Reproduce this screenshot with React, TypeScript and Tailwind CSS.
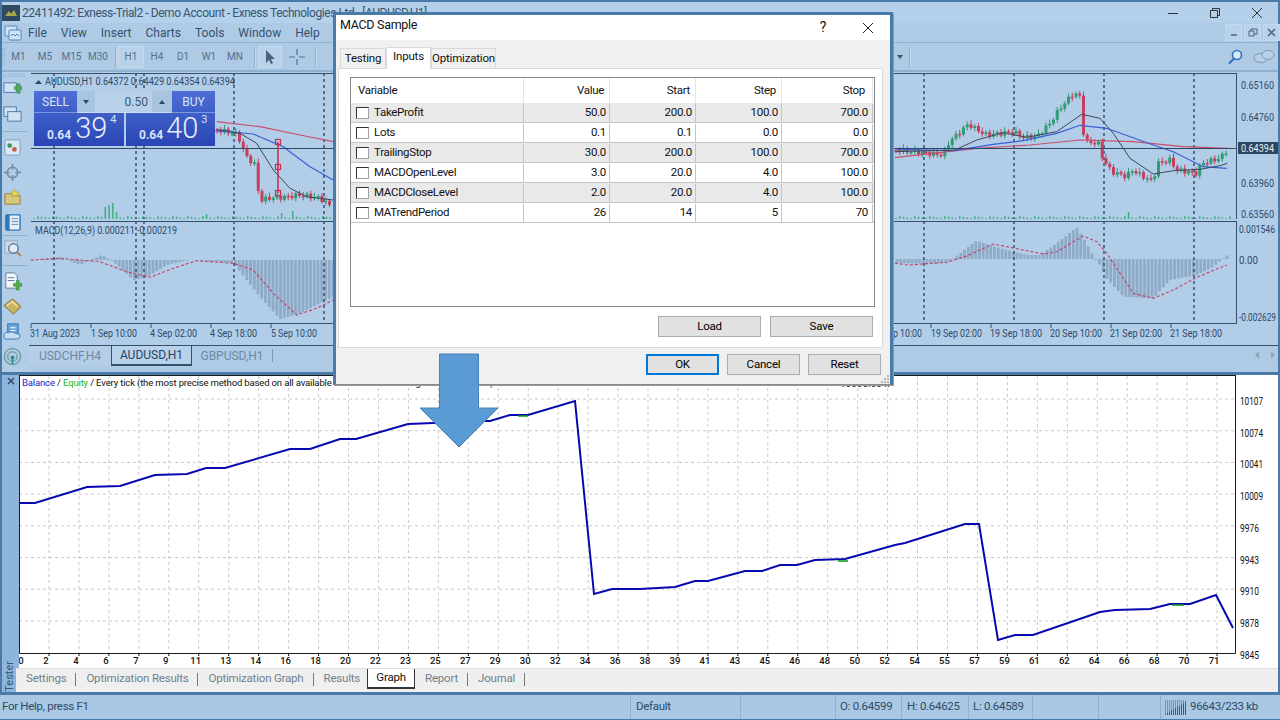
import React from 'react';

type Pt = [number, number];

const interp = (pts: Pt[], x: number) => {
  if (x <= pts[0][0]) return pts[0][1];
  for (let i = 1; i < pts.length; i++) {
    if (x <= pts[i][0]) {
      const [x0, y0] = pts[i - 1];
      const [x1, y1] = pts[i];
      return y0 + ((y1 - y0) * (x - x0)) / (x1 - x0);
    }
  }
  return pts[pts.length - 1][1];
};

const poly = (pts: Pt[]) => pts.map((p) => p[0].toFixed(1) + ',' + p[1].toFixed(1)).join(' ');
// zoomed crop coords back to page coords
const z = (ox: number, oy: number, pts: Pt[]): Pt[] => pts.map((p) => [ox + p[0] / 3, oy + p[1] / 3]);

const rightPrice = z(880, 0, [[50,450],[130,458],[190,465],[210,420],[225,410],[265,372],[300,395],[320,405],[400,395],[430,412],[470,410],[510,370],[540,325],[580,280],[600,290],[606,370],[615,425],[655,430],[670,480],[695,515],[740,530],[755,510],[800,535],[820,545],[830,490],[870,480],[890,510],[950,520],[965,490],[1020,475],[1045,445]]);
const rightBlack = z(880, 0, [[45,455],[225,450],[290,420],[370,398],[440,412],[530,395],[605,343],[660,355],[700,400],[750,475],[820,522],[880,512],[960,508],[1020,497],[1042,490]]);
const rightBlue = z(880, 0, [[50,448],[220,452],[340,433],[430,422],[530,400],[600,376],[680,385],[820,435],[880,455],[970,500],[1040,505]]);
const rightRed = z(880, 0, [[45,473],[290,445],[450,435],[600,420],[760,425],[910,440],[1045,445]]);
const leftPrice: Pt[] = [[217,130],[235,133],[240,140],[245,155],[255,165],[258,190],[262,200],[270,198],[285,197],[300,195],[320,198],[333,208]];
const leftBlack = z(0, 0, [[650,388],[720,400],[770,430],[820,510],[870,565],[920,590],[1000,600]]);
const leftBlue = z(0, 0, [[650,392],[760,402],[850,440],[930,500],[1000,540]]);
const leftRed = z(0, 0, [[650,365],[780,380],[900,405],[1000,425]]);

const leftHist = z(0, 200, [[92,182],[180,172],[240,195],[305,165],[340,185],[400,240],[440,232],[500,195],[570,180],[700,190],[780,290],[840,358],[900,340],[1000,290]]);
const leftSignal = z(0, 200, [[92,180],[180,175],[300,185],[380,215],[450,232],[520,205],[590,182],[700,190],[760,210],[820,280],[890,345],[950,325],[1000,300]]);
const rightHist = z(880, 220, [[50,130],[200,130],[240,100],[290,62],[360,85],[440,105],[480,105],[530,70],[590,22],[620,70],[645,118],[660,135],[680,175],[730,230],[820,235],[870,180],[950,165],[1000,140],[1045,103]]);
const rightSignal = z(880, 220, [[45,130],[85,135],[200,127],[260,108],[340,72],[430,90],[490,102],[530,95],[610,48],[650,65],[680,100],[760,220],[820,235],[880,210],[950,172],[1040,135]]);

const balance: Pt[] = [[19,503],[35,503],[87,487],[120,486],[155,475],[187,474],[206,468],[225,468],[290,449],[310,449],[340,439],[356,439],[408,424],[433,423],[483,421],[490,421],[510,415],[528,415],[575,401],[594,594],[612,589],[640,589],[675,587],[695,581],[708,581],[745,571],[762,571],[780,565],[797,565],[815,560],[845,559],[895,545],[905,543],[965,524],[979,524],[998,640],[1015,635],[1033,635],[1100,612],[1115,610],[1150,609],[1170,604],[1190,604],[1216,595],[1233,628]];

const xLabels = [0,2,4,6,7,9,11,13,14,16,18,20,22,23,25,27,29,30,32,34,36,38,39,41,43,45,46,48,50,52,54,55,57,59,61,62,64,66,68,70,71];
const yLabels = ['10107','10074','10041','10009','9976','9943','9910','9878','9845'];

const Candles = ({ pts, from, to }: { pts: Pt[]; from: number; to: number }) => {
  const out: React.ReactNode[] = [];
  let prev = interp(pts, from);
  let i = 0;
  for (let x = from; x <= to; x += 3.75) {
    const c = interp(pts, x) + Math.sin(i * 2.3) * 2.4;
    const up = c < prev;
    const top = Math.min(c, prev);
    const h = Math.max(Math.abs(c - prev), 1.5);
    const col = up ? '#2f9c72' : '#c63f5f';
    out.push(<line key={'w' + i} x1={x} x2={x} y1={top - 2 - (i % 3)} y2={top + h + 2 + (i % 2)} stroke={col} strokeWidth={1} />);
    out.push(<rect key={'b' + i} x={x - 1.5} y={top} width={3} height={h} fill={col} />);
    prev = c;
    i++;
  }
  return <g>{out}</g>;
};

const Hist = ({ pts, from, to, base }: { pts: Pt[]; from: number; to: number; base: number }) => {
  const out: React.ReactNode[] = [];
  let i = 0;
  for (let x = from; x <= to; x += 3.75) {
    const y = interp(pts, x);
    out.push(<rect key={i} x={x - 1.4} y={Math.min(y, base)} width={2.8} height={Math.abs(y - base)} fill="#8eaac6" />);
    i++;
  }
  return <g>{out}</g>;
};

const Volumes = ({ from, to, base, peaks }: { from: number; to: number; base: number; peaks: Record<number, number> }) => {
  const out: React.ReactNode[] = [];
  let i = 0;
  for (let x = from; x <= to; x += 3.75) {
    const h = peaks[i] ?? 1 + ((i * 7) % 4) * 0.6;
    out.push(<rect key={i} x={x - 0.7} y={base - h} width={1.5} height={h} fill="#3fae7c" />);
    i++;
  }
  return <g>{out}</g>;
};

const vGrid = [54, 136, 144, 234, 324, 924, 1014, 1104, 1194];

const PriceChart = () => (
  <svg width={1247} height={148} viewBox="31 72 1247 148" className="block overflow-visible" fontFamily="Roboto, sans-serif">
    <Volumes from={34} to={332} base={219} peaks={{ 19: 12, 20: 14, 21: 16, 22: 7, 46: 5, 66: 6, 69: 8 }} />
    <Volumes from={896} to={1230} base={219} peaks={{ 62: 7 }} />
    {vGrid.map((x) => (
      <line key={x} x1={x} x2={x} y1={73} y2={219} stroke="#34506c" strokeWidth={1.5} strokeDasharray="3 3" />
    ))}
    <Candles pts={leftPrice} from={217} to={333} />
    <Candles pts={rightPrice} from={896} to={1229} />
    <polyline points={poly(leftRed)} fill="none" stroke="#c8506e" strokeWidth={1.2} />
    <polyline points={poly(leftBlue)} fill="none" stroke="#3a5fd8" strokeWidth={1.2} />
    <polyline points={poly(leftBlack)} fill="none" stroke="#3b4a58" strokeWidth={1} />
    <polyline points={poly(rightRed)} fill="none" stroke="#c8506e" strokeWidth={1.2} />
    <polyline points={poly(rightBlue)} fill="none" stroke="#3a5fd8" strokeWidth={1.2} />
    <polyline points={poly(rightBlack)} fill="none" stroke="#3b4a58" strokeWidth={1} />
    <line x1={31} x2={1236} y1={148.5} y2={148.5} stroke="#2f4a66" strokeWidth={1} />
    {/* trend line tool */}
    <line x1={278} x2={278} y1={142} y2={193} stroke="#c8304f" strokeWidth={1.6} />
    {[142, 167, 193].map((y) => (
      <rect key={y} x={275.5} y={y - 2.5} width={5} height={5} fill="none" stroke="#c8304f" strokeWidth={1.2} />
    ))}
    <line x1={1236.5} x2={1236.5} y1={73} y2={219} stroke="#34506c" />
    <line x1={31} x2={1236} y1={73.5} y2={73.5} stroke="#34506c" />
    <text x={45} y={85} fontSize={11} fill="#2d4a68" textLength={190} lengthAdjust="spacingAndGlyphs">AUDUSD,H1  0.64372 0.64429 0.64354 0.64394</text>
    <path d="M35 84 l3.5 -4 l3.5 4 z" fill="#2d4a68" />
    {[['0.65160', 90], ['0.64760', 122], ['0.63960', 188], ['0.63560', 219]].map(([t, y]) => (
      <text key={t} x={1241} y={Number(y) - 1} fontSize={11} fill="#2d4a68" textLength={33} lengthAdjust="spacingAndGlyphs">{t}</text>
    ))}
    <rect x={1238} y={142} width={40} height={12} fill="#2c4763" />
    <text x={1241} y={152} fontSize={11} fill="#e8f0f8" textLength={33} lengthAdjust="spacingAndGlyphs">0.64394</text>
  </svg>
);

const MacdChart = () => (
  <svg width={1247} height={125} viewBox="31 220 1247 125" className="block overflow-visible" fontFamily="Roboto, sans-serif">
    <Hist pts={leftHist} from={33} to={333} base={260} />
    <Hist pts={rightHist} from={897} to={1229} base={259} />
    {vGrid.map((x) => (
      <line key={x} x1={x} x2={x} y1={221} y2={324} stroke="#34506c" strokeWidth={1.5} strokeDasharray="3 3" />
    ))}
    <polyline points={poly(leftSignal)} fill="none" stroke="#c8405f" strokeWidth={1.1} strokeDasharray="3 2" />
    <polyline points={poly(rightSignal)} fill="none" stroke="#c8405f" strokeWidth={1.1} strokeDasharray="3 2" />
    <line x1={31} x2={1236} y1={221.5} y2={221.5} stroke="#34506c" />
    <line x1={31} x2={1236} y1={323.5} y2={323.5} stroke="#34506c" />
    <line x1={1236.5} x2={1236.5} y1={221} y2={324} stroke="#34506c" />
    <text x={35} y={234} fontSize={11} fill="#2d4a68" textLength={142} lengthAdjust="spacingAndGlyphs">MACD(12,26,9) 0.000211 -0.000219</text>
    {[['31 Aug 2023', 30, 50], ['1 Sep 10:00', 91, 46], ['4 Sep 02:00', 150, 47], ['4 Sep 18:00', 210, 47], ['5 Sep 10:00', 271, 46], ['19 Sep 02:00', 931, 51], ['19 Sep 18:00', 990, 52], ['20 Sep 10:00', 1050, 52], ['21 Sep 02:00', 1110, 52], ['21 Sep 18:00', 1170, 52]].map(([t, x, w]) => (
      <text key={String(t)} x={Number(x)} y={337} fontSize={11} fill="#2d4a68" textLength={Number(w)} lengthAdjust="spacingAndGlyphs">{t}</text>
    ))}
    <text x={893} y={337} fontSize={11} fill="#2d4a68" textLength={29} lengthAdjust="spacingAndGlyphs">p 10:00</text>
    {[31, 91, 151, 211, 271, 931, 991, 1051, 1111, 1171].map((x) => (
      <line key={x} x1={x} x2={x} y1={324} y2={328} stroke="#34506c" />
    ))}
    <text x={1239} y={233} fontSize={10.5} fill="#2d4a68" textLength={36} lengthAdjust="spacingAndGlyphs">0.001546</text>
    <text x={1239} y={264} fontSize={11} fill="#2d4a68" textLength={19} lengthAdjust="spacingAndGlyphs">0.00</text>
    <text x={1239} y={321} fontSize={10} fill="#2d4a68" textLength={37} lengthAdjust="spacingAndGlyphs">-0.002629</text>
  </svg>
);

const TesterGraph = () => (
  <svg width={1259} height={293} viewBox="19 375 1259 293" className="block bg-white shrink-0" fontFamily="Roboto, sans-serif">
    {yLabels.slice(0, 8).map((_, i) => (
      <line key={i} x1={19} x2={1235} y1={399 + i * 31.7} y2={399 + i * 31.7} stroke="#c9c9c9" strokeDasharray="3 3" />
    ))}
    {xLabels.slice(1).map((_, i) => (
      <line key={i} x1={49 + i * 29.95} x2={49 + i * 29.95} y1={376} y2={653} stroke="#c9c9c9" strokeDasharray="3 3" />
    ))}
    <polyline points={poly(balance)} fill="none" stroke="#0808b0" strokeWidth={2} />
    <line x1={518} x2={528} y1={416} y2={416} stroke="#0a9a1a" strokeWidth={1.5} />
    <line x1={838} x2={848} y1={561} y2={561} stroke="#0a9a1a" strokeWidth={1.5} />
    <line x1={1172} x2={1184} y1={605} y2={605} stroke="#0a9a1a" strokeWidth={1.5} />
    <path d="M19.5 375 V653.5 H1235.5 V375" fill="none" stroke="#1c1c1c" />
    <line x1={19} x2={1236} y1={375.5} y2={375.5} stroke="#1c1c1c" />
    <text x={22} y={386} fontSize={9.5} letterSpacing={-0.15}>
      <tspan fill="#2222cc">Balance</tspan>
      <tspan fill="#222"> / </tspan>
      <tspan fill="#18b818">Equity</tspan>
      <tspan fill="#111"> / Every tick (the most precise method based on all available least timeframes to generate each tick)</tspan>
    </text>
    <text x={840} y={387} fontSize={10} fill="#333">10000.00 x</text>
    {yLabels.map((t, i) => (
      <text key={t} x={1240} y={405 + i * 31.7} fontSize={10} fill="#111" textLength={t.length === 5 ? 23 : 19} lengthAdjust="spacingAndGlyphs">{t}</text>
    ))}
    {xLabels.map((t, i) => (
      <text key={t} x={i === 0 ? 21 : 46 + (i - 1) * 29.95} y={664} fontSize={9.5} fontWeight={500} fill="#111" textAnchor="middle">{t}</text>
    ))}
    {xLabels.slice(1).map((_, i) => (
      <line key={i} x1={49 + i * 29.95} x2={49 + i * 29.95} y1={653} y2={656} stroke="#111" />
    ))}
  </svg>
);

const rows = [
  ['TakeProfit', '50.0', '200.0', '100.0', '700.0'],
  ['Lots', '0.1', '0.1', '0.0', '0.0'],
  ['TrailingStop', '30.0', '200.0', '100.0', '700.0'],
  ['MACDOpenLevel', '3.0', '20.0', '4.0', '100.0'],
  ['MACDCloseLevel', '2.0', '20.0', '4.0', '100.0'],
  ['MATrendPeriod', '26', '14', '5', '70'],
];

const DlgButton = ({ label, w, primary }: { label: string; w: string; primary?: boolean }) => (
  <div className={`${w} h-[21px] flex items-center justify-center bg-[#e1e1e1] text-[11.5px] tracking-[-0.2px] text-black ${primary ? 'border-2 border-[#0078d7]' : 'border border-[#adadad]'}`}>
    {label}
  </div>
);

const Dialog = () => (
  <div className="absolute left-[333px] top-[12px] w-[560px] h-[373px] flex flex-col border-t-[3px] border-x-[3px] border-t-[#4a7aa8] border-x-[#4a7aa8] border-b border-b-[#8a8a8a] bg-[#f0f0f0] shadow-[1px_1px_0_#999]">
    <div className="h-[25px] shrink-0 bg-white flex items-start pt-[1px] pl-[4px] text-[12.5px] tracking-[-0.3px] text-[#111]">
      <span>MACD Sample</span>
      <div className="ml-auto flex items-center gap-[36px] pr-[16px] pt-[1px]">
        <span className="text-[14px]">?</span>
        <svg width="12" height="12" viewBox="0 0 12 12"><path d="M1 1 L11 11 M11 1 L1 11" stroke="#222" strokeWidth="1" /></svg>
      </div>
    </div>
    <div className="flex items-end pl-[4px] h-[28px] shrink-0 text-[11.5px] tracking-[-0.2px] text-[#111]">
      <div className="h-[20px] w-[46px] border border-b-0 border-[#d9d9d9] bg-[#f0f0f0] flex items-center justify-center">Testing</div>
      <div className="h-[22px] w-[45px] border border-b-0 border-[#d9d9d9] bg-white flex items-center justify-center pb-[3px] relative top-px">Inputs</div>
      <div className="h-[20px] w-[65px] border border-b-0 border-[#d9d9d9] bg-[#f0f0f0] flex items-center justify-center">Optimization</div>
    </div>
    <div className="mx-[2px] w-[545px] h-[280px] shrink-0 bg-white border border-[#d9d9d9] px-[11px] pt-[8px]">
      <div className="w-[525px] h-[230px] border border-[#828790] text-[11.5px] tracking-[-0.3px] text-[#111]">
        <div className="flex h-[25px] items-center">
          {['Variable', 'Value', 'Start', 'Step', 'Stop'].map((h, i) => (
            <div key={h} className={`h-full flex items-center border-r border-[#e5e5e5] ${i === 0 ? 'w-[173px] pl-[7px]' : i === 4 ? 'w-[91px] justify-end pr-[7px]' : 'w-[86px] justify-end pr-[5px]'}`}>{h}</div>
          ))}
        </div>
        {rows.map((r, ri) => (
          <div key={r[0]} className={`flex h-[20px] pt-px border-b border-[#c4c4c4] ${ri % 2 === 0 ? 'bg-[#e9e9e9]' : 'bg-white'}`}>
            <div className="w-[173px] flex items-center pl-[5px] gap-[5px] border-r border-[#c4c4c4]">
              <span className="w-[13px] h-[12px] bg-white border border-[#a0a0a0] border-t-[#333] border-l-[#333]" />
              <span>{r[0]}</span>
            </div>
            {r.slice(1).map((v, i) => (
              <div key={i} className={`flex items-center justify-end border-r border-[#c4c4c4] ${i === 3 ? 'w-[91px] pr-[4px]' : 'w-[86px] pr-[3px]'}`}>{v}</div>
            ))}
          </div>
        ))}
      </div>
      <div className="w-[523px] flex justify-end gap-[9px] pt-[9px]">
        <DlgButton label="Load" w="w-[103px]" />
        <DlgButton label="Save" w="w-[103px]" />
      </div>
    </div>
    <div className="flex justify-end gap-[8px] pt-[6px] pr-[9px]">
      <DlgButton label="OK" w="w-[73px]" primary />
      <DlgButton label="Cancel" w="w-[73px]" />
      <DlgButton label="Reset" w="w-[73px]" />
    </div>
    <svg className="absolute right-[1px] bottom-[1px]" width="10" height="10" viewBox="0 0 10 10">
      {[[8, 2], [5, 5], [8, 5], [2, 8], [5, 8], [8, 8]].map(([x, y]) => <rect key={x + '-' + y} x={x} y={y} width="2" height="2" fill="#b5b5b5" />)}
    </svg>
  </div>
);

const TradePanel = () => (
  <div className="absolute left-[3px] top-[19px] w-[181px] h-[55px] flex flex-col text-[#d7e3f7]">
    <div className="flex h-[22px] shrink-0">
      <div className="w-[43px] bg-gradient-to-b from-[#4f6fd6] to-[#3f5fc8] flex items-center justify-center text-[12px] border-b border-[#7f95e0]">SELL</div>
      <div className="w-[95px] bg-[#b9d2ea] flex items-center text-[#3d5773] text-[12px] border-b border-[#c9dbee]">
        <div className="w-[18px] h-full flex items-center justify-center bg-[#a8c4df]"><span className="border-x-[3px] border-x-transparent border-t-[4px] border-t-[#2d4a68]" /></div>
        <div className="flex-1 text-right pr-[4px]">0.50</div>
        <div className="w-[20px] h-full flex items-center justify-center bg-[#a8c4df]"><span className="border-x-[3px] border-x-transparent border-b-[4px] border-b-[#2d4a68]" /></div>
      </div>
      <div className="w-[43px] bg-gradient-to-b from-[#4f6fd6] to-[#3f5fc8] flex items-center justify-center text-[12px] border-b border-[#7f95e0]">BUY</div>
    </div>
    <div className="flex flex-1 gap-[2px]">
      <div className="w-[90px] bg-gradient-to-b from-[#3f5fc8] to-[#2a45b5] flex items-end pb-[3px] pl-[13px] leading-none">
        <span className="text-[12px] font-bold pb-[2px]">0.64</span>
        <span className="text-[29px] ml-[4px] text-[#e8eefa] font-light">39</span>
        <span className="text-[11px] ml-[3px] self-start pt-[1px]">4</span>
      </div>
      <div className="w-[89px] bg-gradient-to-b from-[#3f5fc8] to-[#2a45b5] flex items-end pb-[3px] pl-[13px] leading-none">
        <span className="text-[12px] font-bold pb-[2px]">0.64</span>
        <span className="text-[29px] ml-[3px] text-[#e8eefa] font-light">40</span>
        <span className="text-[11px] ml-[3px] self-start pt-[1px]">3</span>
      </div>
    </div>
  </div>
);

const Sep = () => <span className="block w-[2px] h-[20px] bg-[#c4d9ee] border-l border-[#8fb0cf]" />;

const tfA = [['M1', 'w-[27px]'], ['M5', 'w-[26px]'], ['M15', 'w-[27px]'], ['M30', 'w-[26px]']];
const tfB = ['H1', 'H4', 'D1', 'W1', 'MN'];

const SideIcon = ({ children }: { children: React.ReactNode }) => (
  <div className="h-[25px] shrink-0 flex items-center">
    <svg width="19" height="19" viewBox="0 0 20 20" className="block">{children}</svg>
  </div>
);

const SideSep = () => (
  <div className="h-[8px] w-[24px] shrink-0 flex items-center"><div className="w-full h-px bg-[#8fb0cf]" /></div>
);

const SideBar = () => (
  <div className="w-[29px] shrink-0 flex flex-col items-start pl-[1px] pt-[2px]">
    <div className="w-[22px] h-[3px] border-y border-[#8fb0cf] border-dotted" />
    <SideIcon><rect x="1" y="3" width="13" height="10" fill="#cfe3f5" stroke="#4a78a8" /><path d="M12 7 h3 v-3 h3 v3 h2 v3 h-2 v4 h-3 v-4 h-3 z" fill="#4cb04c" stroke="#2e7d32" strokeWidth=".5" /></SideIcon>
    <SideIcon><rect x="1" y="2" width="13" height="10" fill="#cfe3f5" stroke="#4a78a8" /><rect x="5" y="7" width="14" height="10" fill="#cfe3f5" stroke="#4a78a8" /></SideIcon>
    <SideSep />
    <SideIcon><rect x="2" y="2" width="16" height="16" rx="1" fill="#dbe8f5" stroke="#7f9fc0" /><circle cx="7" cy="8" r="2.5" fill="#3a9a5a" /><circle cx="12" cy="12" r="2.5" fill="#c8604a" /></SideIcon>
    <SideIcon><circle cx="10" cy="10" r="5.5" fill="none" stroke="#6f8aa5" strokeWidth="1.5" /><path d="M10 1 v6 M10 13 v6 M1 10 h6 M13 10 h6" stroke="#6f8aa5" strokeWidth="1.5" /></SideIcon>
    <SideIcon><path d="M2 6 h6 l2 2 h8 v9 h-16 z" fill="#d6c97a" stroke="#8c8040" /><path d="M12 1 l2 3 l3 .5 l-2 2 l.5 3 l-3 -1.5 l-3 1.5 l.5 -3 l-2 -2 l3 -.5 z" fill="#e8d456" stroke="#a09030" strokeWidth=".5" /></SideIcon>
    <SideIcon><rect x="3" y="2" width="15" height="16" rx="1" fill="#e7f0f9" stroke="#2e78b8" strokeWidth="1.5" /><rect x="3" y="2" width="4" height="16" fill="#2e78b8" /><path d="M9 6 h7 M9 9 h7 M9 12 h7" stroke="#5a86b0" /></SideIcon>
    <div className="h-0 w-[24px] shrink-0 border-t border-[#8fb0cf]" />
    <SideIcon><rect x="2" y="2" width="13" height="13" fill="#c9dcef" stroke="#8fa6be" /><circle cx="11" cy="10" r="5" fill="#e0ecf7" stroke="#5c7a98" strokeWidth="1.5" /><path d="M15 14 l4 4" stroke="#b0863a" strokeWidth="2" /></SideIcon>
    <SideSep />
    <SideIcon><path d="M3 1 h9 l3 3 v13 h-12 z" fill="#f3f7fb" stroke="#5d7a96" /><path d="M5 6 h7 M5 9 h7" stroke="#5d7a96" /><path d="M11 12 h3 v-3 h3 v3 h3 v3 h-3 v4 h-3 v-4 h-3 z" fill="#4cb04c" stroke="#2e7d32" strokeWidth=".5" /></SideIcon>
    <SideIcon><path d="M1 9 L10 2 L19 10 L11 18 z" fill="#c9b262" stroke="#7c6c30" /><path d="M4 9 L10 5 L15 10" stroke="#efe2a8" strokeWidth="1.5" fill="none" /></SideIcon>
    <SideIcon><rect x="5" y="2" width="11" height="10" fill="#6ea8dc" stroke="#2e6aa8" /><path d="M8 6 h5 M8 9 h5" stroke="#fff" /><path d="M1 14 q1 -4 5 -3 q4 -2 7 1 q5 0 5 3 q0 3 -4 3 h-10 q-4 0 -3 -4 z" fill="#c6dcf0" stroke="#3a78b8" /></SideIcon>
    <SideIcon><circle cx="10" cy="10" r="8.5" fill="none" stroke="#6fa0a0" strokeWidth="1.5" /><circle cx="10" cy="10" r="5" fill="none" stroke="#6fa0a0" strokeWidth="1.5" /><circle cx="10" cy="11" r="2" fill="#2a8a8a" /><path d="M10 11 v7" stroke="#2a8a8a" strokeWidth="1.5" /></SideIcon>
  </div>
);

const testerTabs = ['Settings', 'Optimization Results', 'Optimization Graph', 'Results', 'Graph', 'Report', 'Journal'];

export default function App() {
  return (
    <div className="relative w-[1280px] h-[720px] overflow-hidden flex flex-col bg-[#b2cde8] font-['Roboto',sans-serif] text-[#34526f]">
      <div className="h-[375px] shrink-0 flex flex-col border-x-2 border-b-[3px] border-[#4a7aa8] border-t-[2px]">
        {/* title bar */}
        <div className="h-[21px] shrink-0 flex items-center bg-[#b4d0ea]">
          <svg width="18" height="16" viewBox="0 0 18 16" className="mr-[2px]"><rect width="18" height="16" fill="#2f4a5e" /><path d="M3 11 L7 6 L9 9 L12 5 L15 11 z" fill="#a8a84a" /></svg>
          <span className="text-[12px] tracking-[-0.45px] text-[#3a5570] whitespace-nowrap">22411492: Exness-Trial2 - Demo Account - Exness Technologies Ltd - [AUDUSD,H1]</span>
          <div className="ml-auto flex items-center gap-[30px] pr-[15px]">
            <svg width="12" height="12" viewBox="0 0 12 12"><path d="M1 6.5 H11" stroke="#333" /></svg>
            <svg width="12" height="12" viewBox="0 0 12 12"><path d="M1.5 3.5 H8.5 V10.5 H1.5 Z M3.5 3 V1.5 H10.5 V8.5 H9" fill="none" stroke="#333" /></svg>
            <svg width="12" height="12" viewBox="0 0 12 12"><path d="M1 1 L11 11 M11 1 L1 11" stroke="#333" /></svg>
          </div>
        </div>
        {/* menu bar */}
        <div className="h-[20px] shrink-0 flex items-center bg-[#aecae5] text-[12px] border-b border-[#8fb0cf]">
          <svg width="18" height="18" viewBox="0 0 18 18" className="ml-[2px] mr-[6px]"><rect x="1" y="2" width="12" height="10" rx="1" fill="#cfe3f5" stroke="#4a88c0" /><rect x="5" y="6" width="12" height="10" rx="1" fill="#cfe3f5" stroke="#4a88c0" /><path d="M7 12 l2 -2 l2 2 l2 -2 l2 2" fill="none" stroke="#4a88c0" /></svg>
          <div className="flex gap-[14px]">
            {['File', 'View', 'Insert', 'Charts', 'Tools', 'Window', 'Help'].map((m) => <span key={m}>{m}</span>)}
          </div>
          <div className="ml-auto flex gap-[2px] -mr-[2px]">
            {[
              <path key="a" d="M3 8 H9" stroke="#4a6480" strokeWidth="1.5" />,
              <path key="b" d="M2 4 H7 V9 H2 Z M4 4 V2 H10 V7 H7" fill="none" stroke="#4a6480" />,
              <path key="c" d="M2 2 L9 9 M9 2 L2 9" stroke="#4a6480" strokeWidth="1.5" />,
            ].map((p, i) => (
              <div key={i} className="w-[17px] h-[17px] bg-[#b9d3ec] border border-[#c4d9ee] flex items-center justify-center"><svg width="12" height="11" viewBox="0 0 12 11">{p}</svg></div>
            ))}
          </div>
        </div>
        {/* toolbar */}
        <div className="h-[29px] shrink-0 flex items-center bg-[#aecae5] text-[10px] border-b-2 border-[#8fb0cf] text-[#55708c]">
          <div className="w-[3px] h-[18px] border-x border-dotted border-[#8fb0cf]" />
          {tfA.map(([t, w]) => <span key={t} className={`${w} text-center`}>{t}</span>)}
          <div className="ml-[4px] mr-px"><Sep /></div>
          {tfB.map((t, i) => (
            <span key={t} className={`w-[26px] h-[22px] flex items-center justify-center ${i === 0 ? 'bg-[#b8d2eb] border border-[#c6daee]' : ''}`}>{t}</span>
          ))}
          <div className="ml-[6px] mr-[2px]"><Sep /></div>
          <div className="w-[24px] h-[22px] flex items-center justify-center bg-[#b8d2eb] border border-[#c6daee]">
            <svg width="12" height="16" viewBox="0 0 12 16"><path d="M2 1 L2 14 L5 11 L7 15 L9 14 L7 10 L11 10 Z" fill="#4a6480" /></svg>
          </div>
          <svg width="18" height="18" viewBox="0 0 18 18" className="ml-[6px]"><path d="M9 1 V7 M9 11 V17 M1 9 H7 M11 9 H17" stroke="#56708c" strokeWidth="1.2" /></svg>
          <div className="ml-[9px]"><Sep /></div>
          <div className="flex-1" />
          <span className="border-x-[3px] border-x-transparent border-t-[4px] border-t-[#3a5570] mr-[6px]" />
          <Sep />
          <div className="w-[316px]" />
          <svg width="16" height="16" viewBox="0 0 16 16"><circle cx="10" cy="6" r="4.5" fill="#d8e8f6" stroke="#2f72c0" strokeWidth="1.6" /><path d="M7 9.5 L2 14.5" stroke="#2f72c0" strokeWidth="2.2" /></svg>
          <svg width="22" height="16" viewBox="0 0 22 16" className="ml-[10px] mr-[3px]"><ellipse cx="8" cy="9" rx="7" ry="4.5" fill="#b8d0e6" stroke="#7f98b2" /><ellipse cx="15" cy="6" rx="6" ry="4.5" fill="#b8d0e6" stroke="#7f98b2" /></svg>
        </div>
        {/* side toolbar + charts + chart tabs */}
        <div className="flex-1 min-h-0 flex">
          <SideBar />
          <div className="flex-1 min-w-0 flex flex-col">
            <div className="h-[273px] shrink-0 flex flex-col relative">
              <PriceChart />
              <MacdChart />
              <TradePanel />
            </div>
            <div className="flex-1 flex items-start -ml-[2px] bg-[#aecae5] border-t border-[#34506c] text-[12px] text-[#6d89a5]">
              <span className="w-[82px] h-[19px] flex items-center justify-center bg-[#b5cfe9]">USDCHF,H4</span>
              <span className="w-[81px] h-[20px] flex items-center justify-center bg-[#b8d2eb] text-[#2a4560] border-x border-b-2 border-[#34506c]">AUDUSD,H1</span>
              <span className="w-[80px] h-[19px] flex items-center justify-center">GBPUSD,H1</span>
              <span className="w-px h-[13px] bg-[#7f98b2] mt-[3px]" />
              <div className="ml-auto flex gap-[12px] pr-[3px] mt-[5px]">
                <span className="border-y-[4px] border-y-transparent border-r-[4px] border-r-[#8fa6be]" />
                <span className="border-y-[4px] border-y-transparent border-l-[4px] border-l-[#8fa6be]" />
              </div>
            </div>
          </div>
        </div>
      </div>
      {/* tester */}
      <div className="h-[320px] shrink-0 flex border-x-2 border-b-[3px] border-[#4a7aa8]">
        <div className="w-[17px] shrink-0 bg-[#8fb5dc] flex flex-col items-center justify-between">
          <svg width="8" height="8" viewBox="0 0 8 8" className="mt-[2px]"><path d="M1 1 L7 7 M7 1 L1 7" stroke="#2d4a68" strokeWidth="1.5" /></svg>
          <span className="[writing-mode:vertical-rl] rotate-180 text-[11px] text-[#3a5570] pb-[3px]">Tester</span>
        </div>
        <div className="flex-1 min-w-0 flex flex-col">
          <TesterGraph />
          <div className="flex-1 bg-[#efefef] border-t border-[#e0e0e0] flex items-start -ml-[3px] text-[11.5px] tracking-[-0.2px] text-[#6f7f8e]">
            {testerTabs.map((t) => (
              <React.Fragment key={t}>
                {t === 'Graph' ? (
                  <span className="w-[48px] h-[20px] flex items-center justify-center bg-white text-[#111] border-x border-b-2 border-[#333] -ml-[2px]">{t}</span>
                ) : (
                  <span className="h-[20px] flex items-center pl-[1px] pr-[9px] ml-[9px]">{t}</span>
                )}
                {t !== 'Results' && t !== 'Graph' && <span className="w-px h-[13px] mt-[4px] bg-[#777]" />}
              </React.Fragment>
            ))}
          </div>
        </div>
      </div>
      {/* status bar */}
      <div className="flex-1 flex items-center bg-[#aac8e4] text-[11.5px] tracking-[-0.3px] text-[#2f4a66] border-b border-[#4a7aa8]">
        <span className="w-[630px] pl-[2px] shrink-0">For Help, press F1</span>
        <span className="w-[110px] pl-[5px] border-l border-[#8fb0cf] h-full flex items-center">Default</span>
        <span className="w-[95px] border-l border-[#8fb0cf] h-full" />
        <span className="w-[66px] pl-[4px] border-l border-[#8fb0cf] h-full flex items-center">O: 0.64599</span>
        <span className="w-[67px] pl-[5px] border-l border-[#8fb0cf] h-full flex items-center">H: 0.64625</span>
        <span className="w-[64px] pl-[4px] border-l border-[#8fb0cf] h-full flex items-center">L: 0.64589</span>
        <span className="w-[66px] border-l border-[#8fb0cf] h-full" />
        <span className="w-[62px] border-l border-[#8fb0cf] h-full" />
        <span className="flex-1 pl-[4px] border-l border-[#8fb0cf] h-full flex items-center gap-[3px]">
          <svg width="22" height="15" viewBox="0 0 22 15">
            {Array.from({ length: 11 }).map((_, i) => (
              <g key={i}>
                <rect x={i * 2} y={0} width={1} height={15} fill="#6fa08a" />
                <rect x={i * 2} y={14 - i * 1.2} width={1} height={i * 1.2 + 1} fill="#2a5f8a" />
              </g>
            ))}
          </svg>
          96643/233 kb
        </span>
      </div>
      <Dialog />
      <svg className="absolute left-[419px] top-[353px]" width="80" height="95" viewBox="0 0 80 95">
        <path d="M20.5 1 H59.5 V55 H79 L40 94 L1 55 H20.5 Z" fill="#5b9bd5" stroke="#4a82b8" />
      </svg>
    </div>
  );
}
